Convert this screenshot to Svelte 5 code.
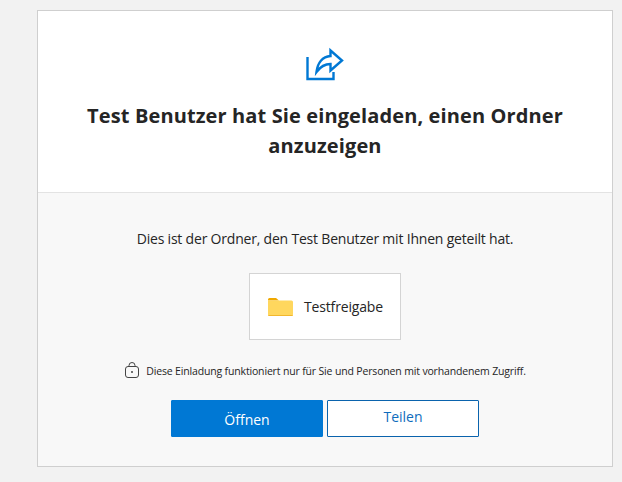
<script>
  const title = 'Test Benutzer hat Sie eingeladen, einen Ordner anzuzeigen';
</script>

<main class="page">
  <section class="card">
    <header class="top">
      <svg class="share" width="38" height="34" viewBox="1 0 38 34" fill="none" stroke="#0078d4" stroke-width="2.400">
        <path d="M2.500 10v22h26V25" />
        <path d="M11.500 25c1-9 6-15.500 14-16V3.500L37 13.500 25.500 23.500V17c-6 0-10 2.500-14 8z" stroke-linejoin="miter" />
      </svg>
      <h1>{title}</h1>
    </header>
    <div class="body">
      <p class="lead">Dies ist der Ordner, den Test Benutzer mit Ihnen geteilt hat.</p>
      <div class="item">
        <svg width="25" height="18" viewBox="0 0 25 18">
          <path d="M0 1.500A1.500 1.500 0 0 1 1.500 0h6.500L11 2.500H0z" fill="#f0a800" />
          <path d="M0 2.500h23.500A1.500 1.500 0 0 1 25 4v12.500a1.500 1.500 0 0 1-1.500 1.500h-22A1.500 1.500 0 0 1 0 16.500z" fill="#ffd75e" />
          <path d="M0 17h25a1.200 1.200 0 0 1-1.200 1H1.200A1.200 1.200 0 0 1 0 17z" fill="#f2b72d" />
        </svg>
        <span>Testfreigabe</span>
      </div>
      <p class="note">
        <svg width="16" height="18" viewBox="0 0 16 18" fill="none" stroke="#444" stroke-width="1">
          <rect x="1.500" y="4.500" width="13" height="11" rx="2.500" />
          <path d="M5 4.500V3.500a3 3 0 0 1 6 0v1" />
          <circle cx="8" cy="10" r="1" fill="#444" stroke="none" />
        </svg>
        <span>Diese Einladung funktioniert nur für Sie und Personen mit vorhandenem Zugriff.</span>
      </p>
      <div class="actions">
        <button class="primary">Öffnen</button>
        <button class="secondary">Teilen</button>
      </div>
    </div>
  </section>
</main>

<style>
  :global(body) {
    margin: 0;
    background: #f2f2f2;
  }
  .page {
    padding: 10px 0 0 37px;
    font-family: "Open Sans", "Noto Sans", sans-serif;
    color: #252525;
  }
  .card {
    box-sizing: border-box;
    width: 576px;
    height: 457px;
    border: 1px solid #cfcfcf;
    background: #f8f8f8;
    display: flex;
    flex-direction: column;
  }
  .top {
    box-sizing: border-box;
    height: 182px;
    background: #fff;
    border-bottom: 1px solid #e3e3e3;
    display: flex;
    flex-direction: column;
    align-items: center;
    padding-top: 36px;
  }
  .share {
    display: block;
  }
  h1 {
    margin: 20px 0 0;
    width: 500px;
    text-align: center;
    font-size: 20px;
    line-height: 30px;
    font-weight: 700;
    letter-spacing: 0.12px;
  }
  .body {
    flex: 1;
    display: flex;
    flex-direction: column;
    align-items: center;
  }
  .lead {
    margin: 37px 0 0;
    font-size: 14px;
    line-height: 18px;
    letter-spacing: -0.2px;
  }
  .item {
    box-sizing: border-box;
    margin-top: 25px;
    width: 152px;
    height: 67px;
    background: #fff;
    border: 1px solid #d4d4d4;
    display: flex;
    align-items: center;
    padding-left: 18px;
    gap: 10px;
    font-size: 14px;
    letter-spacing: -0.16px;
  }
  .item span {
    margin-left: 1px;
  }
  .note {
    margin: 22px 0 0;
    display: flex;
    align-items: center;
    gap: 6px;
    font-size: 10.500px;
    line-height: 18px;
    letter-spacing: -0.16px;
  }
  .actions {
    margin-top: 20px;
    display: flex;
    gap: 4px;
  }
  button {
    box-sizing: border-box;
    width: 152px;
    height: 37px;
    font: inherit;
    font-size: 14px;
    border-radius: 1px;
    padding: 0;
  }
  .primary {
    background: #0078d4;
    border: 1px solid #0078d4;
    color: #fff;
    padding-top: 2px;
  }
  .secondary {
    background: #fff;
    border: 1px solid #0a63ad;
    color: #0f6cbd;
    padding-bottom: 4px;
  }
</style>
